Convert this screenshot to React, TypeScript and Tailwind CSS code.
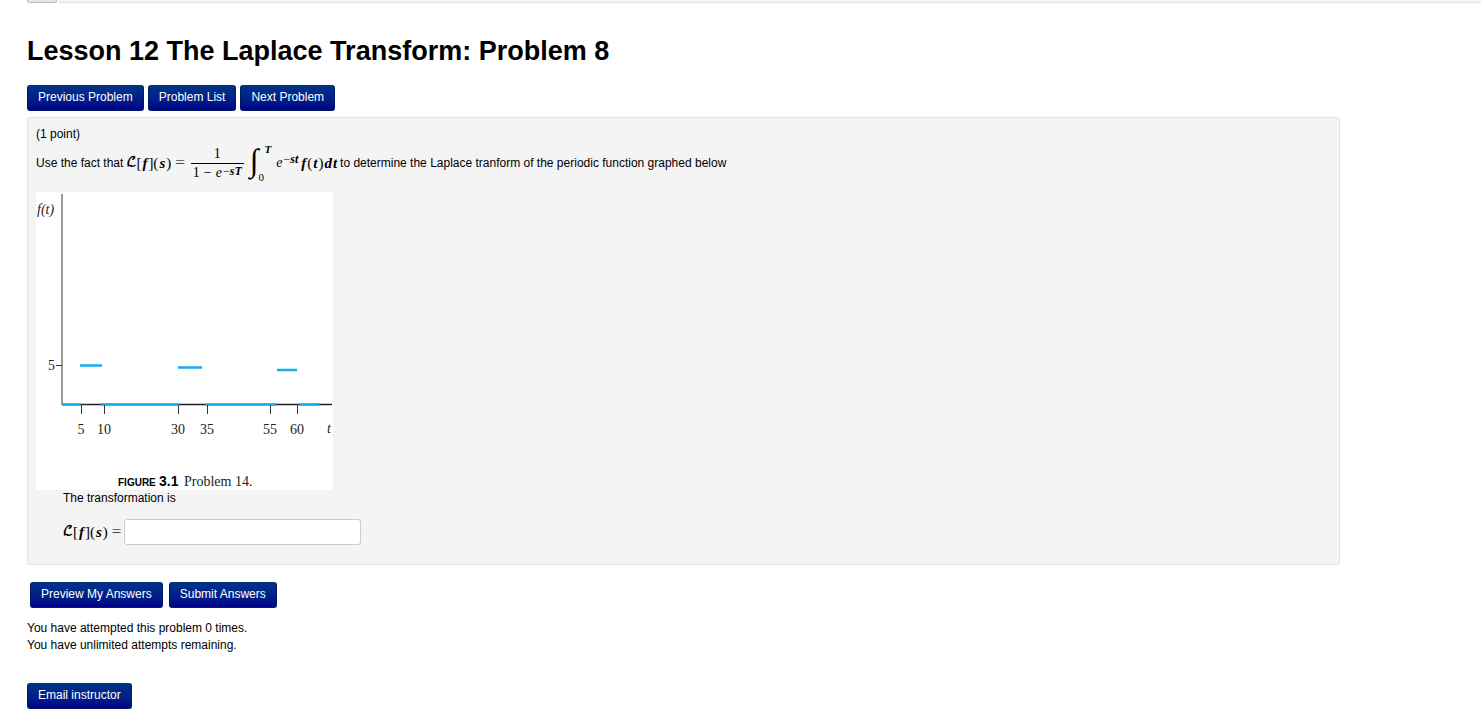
import type { ReactNode } from "react"

interface Tick {
  x: number
  label: string
}

interface Segment {
  from: number
  to: number
  y: number
}

const ticks: Tick[] = [
  { x: 45, label: "5" },
  { x: 68, label: "10" },
  { x: 142, label: "30" },
  { x: 171, label: "35" },
  { x: 234, label: "55" },
  { x: 261, label: "60" },
]

const segments: Segment[] = [
  { from: 26, to: 45, y: 212.5 },
  { from: 65, to: 143, y: 212.5 },
  { from: 169, to: 240, y: 212.5 },
  { from: 263, to: 283, y: 212.5 },
  { from: 44, to: 66, y: 173.5 },
  { from: 142, to: 166, y: 175.5 },
  { from: 241, to: 261, y: 178 },
]

function Button({ children }: { children: ReactNode }) {
  return (
    <button
      type="button"
      className="h-[26px] rounded-[3px] border border-[#001a66] border-t-[#0a3070] bg-gradient-to-b from-[#003388] to-[#000088] px-[10px] pb-[2px] text-[12px] leading-[20px] text-white hover:to-[#003388]"
    >
      {children}
    </button>
  )
}

// A math variable
function Var({ children }: { children: ReactNode }) {
  return <i className="font-bold">{children}</i>
}

// L[f](s) =
function LaplaceOf() {
  return (
    <span className="flex items-center whitespace-nowrap font-['Liberation_Serif',serif] text-[15px] leading-[18px]">
      <span className="font-['DejaVu_Math_TeX_Gyre','DejaVu_Serif',serif] text-[13px] font-bold">ℒ</span>
      <span>[</span>
      <span className="px-px">
        <Var>f</Var>
      </span>
      <span>](</span>
      <span className="px-px">
        <Var>s</Var>
      </span>
      <span>)</span>
      <span className="ml-1 text-[17px] text-[#444]">=</span>
    </span>
  )
}

function Integral() {
  return (
    <span className="flex items-center font-['Liberation_Serif',serif] text-[14px] leading-[18px]">
      <span className="ml-[6px] flex flex-col items-center">
        <span className="leading-[18px]">1</span>
        <span className="flex border-t border-black px-[2px] leading-[18px]">
          <span className="flex gap-1">
            <span>1</span>
            <span>−</span>
            <i>e</i>
          </span>
          <sup className="top-0 ml-px text-[12px] leading-[14px]">
            −<Var>sT</Var>
          </sup>
        </span>
      </span>
      <span className="ml-[6px] pb-[6px] text-[32px] leading-[32px]">∫</span>
      <span className="flex h-[40px] flex-col justify-between text-[11px] leading-[12px]">
        <span className="pl-[6px]">
          <Var>T</Var>
        </span>
        <span>0</span>
      </span>
      <span className="ml-[5px] flex">
        <i>e</i>
        <sup className="top-0 ml-px text-[12px] leading-[10px]">
          −<Var>st</Var>
        </sup>
        <span className="ml-[3px] flex gap-px text-[15px]">
          <Var>f</Var>
          <span>(</span>
          <Var>t</Var>
          <span>)</span>
          <Var>d</Var>
          <Var>t</Var>
        </span>
      </span>
    </span>
  )
}

function Graph() {
  return (
    <svg
      width="297"
      height="298"
      viewBox="0 0 297 298"
      role="img"
      aria-label="Graph of the periodic function f(t)"
      className="block bg-white font-['Liberation_Serif',serif] text-[14px]"
      fill="#222"
    >
      <path d="M26 2V213" stroke="#777" strokeWidth="1.5" />
      <path d="M26 212.5H296" stroke="#222" strokeWidth="1.3" />
      <path d="M20 173.5H26" stroke="#333" />
      {segments.map((s) => (
        <path key={`${s.from}-${s.y}`} d={`M${s.from} ${s.y}H${s.to}`} stroke="#12aeef" strokeWidth="2.5" />
      ))}
      {ticks.map((tick) => (
        <g key={tick.label}>
          <path d={`M${tick.x + 0.5} 213V222`} stroke="#333" />
          <text x={tick.x} y="242" textAnchor="middle">
            {tick.label}
          </text>
        </g>
      ))}
      <text x="1" y="22" fontStyle="italic">
        f(t)
      </text>
      <text x="12" y="178">
        5
      </text>
      <text x="291" y="241" fontStyle="italic">
        t
      </text>
      <text x="82" y="294" fill="#000" className="font-['Liberation_Sans',sans-serif] text-[10px] font-bold">
        FIGURE
      </text>
      <text x="123" y="294" fill="#000" className="font-['Liberation_Sans',sans-serif] text-[14px] font-bold">
        3.1
      </text>
      <text x="148" y="294">
        Problem 14.
      </text>
    </svg>
  )
}

export default function App() {
  return (
    <div className="min-h-screen bg-white pb-3 font-['Liberation_Sans',Arial,sans-serif] text-[12px] leading-[17px] text-black">
      {/* Bottom edge of the navigation bar */}
      <div className="flex h-[3px] gap-px pl-[27px]">
        <div className="w-[30px] rounded-b-[3px] border border-t-0 border-[#bbb] bg-[#e6e6e6]" />
        <div className="flex-1 rounded-bl-[3px] border-b border-[#e3e3e3] bg-[#f5f5f5]" />
      </div>

      <main className="px-[27px]">
        <h1 className="mt-7 text-[27px] font-bold leading-[40px]">Lesson 12 The Laplace Transform: Problem 8</h1>

        <nav className="mt-[14px] flex gap-1">
          <Button>Previous Problem</Button>
          <Button>Problem List</Button>
          <Button>Next Problem</Button>
        </nav>

        <form onSubmit={(e) => e.preventDefault()}>
          <section className="mt-[6px] w-[92%] rounded-[3px] border border-[#e3e3e3] bg-[#f4f4f4] px-2 pb-[19px] pt-2">
            <p>(1 point)</p>
            <div className="flex h-10 items-center gap-[3px] whitespace-nowrap">
              <span>Use the fact that</span>
              <span className="flex items-center">
                <LaplaceOf />
                <Integral />
              </span>
              <span>to determine the Laplace tranform of the periodic function graphed below</span>
            </div>
            <div className="mt-[9px]">
              <Graph />
            </div>
            <div className="pl-[27px]">
              <p>The transformation is</p>
              <div className="mt-3 flex items-center gap-[3px]">
                <label htmlFor="answer">
                  <LaplaceOf />
                </label>
                <input
                  id="answer"
                  type="text"
                  className="h-[26px] w-[237px] rounded-[3px] border border-[#ccc] bg-white px-[6px] outline-none focus:border-[#66afe9]"
                />
              </div>
            </div>
          </section>

          <div className="mt-[17px] flex gap-[6px] pl-[3px]">
            <Button>Preview My Answers</Button>
            <Button>Submit Answers</Button>
          </div>
        </form>

        <p className="mt-3">
          You have attempted this problem 0 times.
          <br />
          You have unlimited attempts remaining.
        </p>

        <div className="mt-[29px]">
          <Button>Email instructor</Button>
        </div>
      </main>
    </div>
  )
}
